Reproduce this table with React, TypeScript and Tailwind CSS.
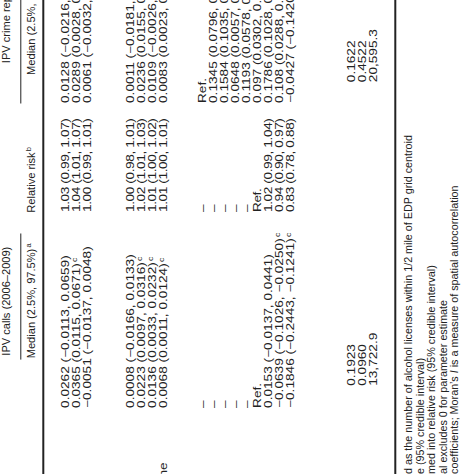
import React from "react";

type V = { t: string; s?: string };
type Row = { label?: string; calls?: V; rr?: V; crime?: V };

// the source figure is a table lying on its side and stretched along its width,
// so it is laid out upright here and then stretched + turned as a whole
const cols = "grid grid-cols-[50.8px_150.7px_83.9px_240px] whitespace-nowrap";

const group1: Row[] = [
  { calls: { t: "0.0262 (−0.0113, 0.0659)" }, rr: { t: "1.03 (0.99, 1.07)" }, crime: { t: "0.0128 (−0.0216, 0.0471)" } },
  { calls: { t: "0.0365 (0.0115, 0.0671)", s: "c" }, rr: { t: "1.04 (1.01, 1.07)" }, crime: { t: "0.0289 (0.0028, 0.0551)" } },
  { calls: { t: "−0.0051 (−0.0137, 0.0048)" }, rr: { t: "1.00 (0.99, 1.01)" }, crime: { t: "0.0061 (−0.0032, 0.0155)" } },
];

const group2: Row[] = [
  { calls: { t: "0.0008 (−0.0166, 0.0133)" }, rr: { t: "1.00 (0.98, 1.01)" }, crime: { t: "0.0011 (−0.0181, 0.0204)" } },
  { calls: { t: "0.0223 (0.0097, 0.0316)", s: "c" }, rr: { t: "1.02 (1.01, 1.03)" }, crime: { t: "0.0236 (0.0155, 0.0318)" } },
  { calls: { t: "0.0136 (0.0033, 0.0232)", s: "c" }, rr: { t: "1.01 (1.00, 1.02)" }, crime: { t: "0.0109 (−0.0026, 0.0244)" } },
  { label: "Alcohol outlets × baseline", calls: { t: "0.0068 (0.0011, 0.0124)", s: "c" }, rr: { t: "1.01 (1.00, 1.01)" }, crime: { t: "0.0083 (0.0023, 0.0143)" } },
];

const group3: Row[] = [
  { calls: { t: "–" }, rr: { t: "–" }, crime: { t: "Ref." } },
  { calls: { t: "–" }, rr: { t: "–" }, crime: { t: "0.1345 (0.0796, 0.1893)" } },
  { calls: { t: "–" }, rr: { t: "–" }, crime: { t: "0.1584 (0.1035, 0.2133)" } },
  { calls: { t: "–" }, rr: { t: "–" }, crime: { t: "0.0648 (0.0057, 0.1239)" } },
  { calls: { t: "–" }, rr: { t: "–" }, crime: { t: "0.1193 (0.0578, 0.1808)" } },
  { calls: { t: "Ref." }, rr: { t: "Ref." }, crime: { t: "0.097 (0.0302, 0.1638)" } },
  { calls: { t: "0.0153 (−0.0137, 0.0441)" }, rr: { t: "1.02 (0.99, 1.04)" }, crime: { t: "0.1786 (0.1028, 0.2544)" } },
  { calls: { t: "−0.0639 (−0.1026, −0.0250)", s: "c" }, rr: { t: "0.94 (0.90, 0.97)" }, crime: { t: "0.108 (0.0288, 0.1872)" } },
  { calls: { t: "−0.1846 (−0.2443, −0.1241)", s: "c" }, rr: { t: "0.83 (0.78, 0.88)" }, crime: { t: "−0.0427 (−0.1420, 0.0566)" } },
];

const group4: Row[] = [
  { calls: { t: "0.1923" }, crime: { t: "0.1622" } },
  { calls: { t: "0.0960" }, crime: { t: "0.4522" } },
  { calls: { t: "13,722.9" }, crime: { t: "20,595.3" } },
];

// condensed lettering for heads and notes
function Narrow({ children }: { children: React.ReactNode }) {
  return <span className="inline-block origin-left scale-x-[0.82]">{children}</span>;
}

function Val({ v }: { v?: V }) {
  if (!v) return null;
  return (
    <>
      {v.t}
      {v.s && <sup className="ml-[1px] text-[6.5px]">{v.s}</sup>}
    </>
  );
}

function Group({ rows, indent }: { rows: Row[]; indent?: boolean }) {
  return (
    <div>
      {rows.map((r, i) => (
        <div key={i} className={`${cols} h-[11px] text-[10.5px] leading-[11px]`}>
          <div className="flex">
            {r.label && (
              <div className="flex w-[9px] justify-end">
                <span>{r.label}</span>
              </div>
            )}
          </div>
          <div className={indent ? "pl-[17px]" : ""}>
            <Val v={r.calls} />
          </div>
          <div className="tracking-[-0.3px]">
            <Val v={r.rr} />
          </div>
          <div className={indent ? "pl-[16px]" : ""}>
            <Val v={r.crime} />
          </div>
        </div>
      ))}
    </div>
  );
}

const notes = [
  "d as the number of alcohol licenses within 1/2 mile of EDP grid centroid",
  "e (95% credible interval)",
  "med into relative risk (95% credible interval)",
  "al excludes 0 for parameter estimate",
];

export default function App() {
  return (
    <div className="h-[474px] w-[474px] overflow-hidden bg-white">
      <div className="mx-auto h-[474px] w-[364.6px] -rotate-90 scale-x-[1.3] overflow-hidden bg-white font-['Liberation_Sans',Arial,sans-serif] text-[#222]">
        {/* column heads */}
        <div className={`${cols} h-[20px] pt-[1px] text-[10.4px] leading-[11px]`}>
          <div />
          <div className="pl-[40px]">
            <Narrow>IPV calls (2006–2009)</Narrow>
          </div>
          <div />
          <div className="pl-[31px]">
            <Narrow>IPV crime reports (2006–2009)</Narrow>
          </div>
        </div>
        <div className={`${cols} h-[5.5px]`}>
          <div />
          <div className="ml-[37px] w-[97px] border-t border-[#222]" />
          <div />
          <div className="border-t border-[#222]" />
        </div>
        <div className={`${cols} h-[11px] text-[10.4px] leading-[11px]`}>
          <div />
          <div className="pl-[38px]">
            <Narrow>
              Median (2.5%, 97.5%)<sup className="ml-[1px] text-[7px]">a</sup>
            </Narrow>
          </div>
          <div>
            <Narrow>
              Relative risk<sup className="ml-[1px] text-[7px]">b</sup>
            </Narrow>
          </div>
          <div className="pl-[21.5px]">
            <Narrow>Median (2.5%, 97.5%)</Narrow>
          </div>
        </div>
        <div className="mt-[5.5px] h-[1.5px] bg-[#222]" />

        <div className="mt-[16.5px]">
          <Group rows={group1} />
        </div>
        <div className="mt-[32px]">
          <Group rows={group2} />
        </div>
        <div className="mt-[28px]">
          <Group rows={group3} />
        </div>
        <div className="mt-[50px]">
          <Group rows={group4} indent />
        </div>

        <div className="mt-[15px] h-[1.5px] bg-[#222]" />

        <div className="mt-[7.5px] text-[10.1px] leading-[11.5px] whitespace-nowrap">
          {notes.map((n) => (
            <div key={n} className="h-[11.5px]">
              <Narrow>{n}</Narrow>
            </div>
          ))}
          <div className="h-[11.5px]">
            <Narrow>
              coefficients; Moran’s <i>I</i> is a measure of spatial autocorrelation
            </Narrow>
          </div>
        </div>
      </div>
    </div>
  );
}
